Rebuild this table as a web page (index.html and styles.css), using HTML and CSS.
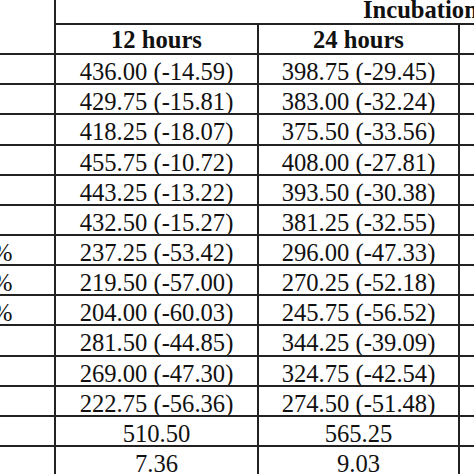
FILE: index.html
```html
<!DOCTYPE html>
<html lang="en">
<head>
<meta charset="utf-8">
<title>Incubation table</title>
<link rel="stylesheet" href="styles.css">
</head>
<body>
<table class="data">
  <colgroup>
    <col class="c-label">
    <col class="c-a">
    <col class="c-b">
    <col class="c-c">
  </colgroup>
  <thead>
    <tr>
      <th class="label" rowspan="2">Treatment</th>
      <th class="group" colspan="3">Incubation period (hours)</th>
    </tr>
    <tr>
      <th>12 hours</th>
      <th>24 hours</th>
      <th>48 hours</th>
    </tr>
  </thead>
  <tbody>
    <tr><td class="label">Control A</td><td>436.00 (-14.59)</td><td>398.75 (-29.45)</td><td></td></tr>
    <tr><td class="label">Control B</td><td>429.75 (-15.81)</td><td>383.00 (-32.24)</td><td></td></tr>
    <tr><td class="label">Control C</td><td>418.25 (-18.07)</td><td>375.50 (-33.56)</td><td></td></tr>
    <tr><td class="label">Vehicle A</td><td>455.75 (-10.72)</td><td>408.00 (-27.81)</td><td></td></tr>
    <tr><td class="label">Vehicle B</td><td>443.25 (-13.22)</td><td>393.50 (-30.38)</td><td></td></tr>
    <tr><td class="label">Vehicle C</td><td>432.50 (-15.27)</td><td>381.25 (-32.55)</td><td></td></tr>
    <tr><td class="label">Extract 1.0%</td><td>237.25 (-53.42)</td><td>296.00 (-47.33)</td><td></td></tr>
    <tr><td class="label">Extract 2.0%</td><td>219.50 (-57.00)</td><td>270.25 (-52.18)</td><td></td></tr>
    <tr><td class="label">Extract 3.0%</td><td>204.00 (-60.03)</td><td>245.75 (-56.52)</td><td></td></tr>
    <tr><td class="label">Drug A</td><td>281.50 (-44.85)</td><td>344.25 (-39.09)</td><td></td></tr>
    <tr><td class="label">Drug B</td><td>269.00 (-47.30)</td><td>324.75 (-42.54)</td><td></td></tr>
    <tr><td class="label">Drug C</td><td>222.75 (-56.36)</td><td>274.50 (-51.48)</td><td></td></tr>
    <tr><td class="label">Untreated</td><td>510.50</td><td>565.25</td><td></td></tr>
    <tr><td class="label">LSD</td><td>7.36</td><td>9.03</td><td></td></tr>
  </tbody>
</table>
</body>
</html>
```

FILE: styles.css
```css
html, body {
  margin: 0;
  padding: 0;
  background: #ffffff;
  overflow: hidden;
}

body {
  width: 474px;
  height: 474px;
}

.data {
  border-collapse: collapse;
  table-layout: fixed;
  width: 784px;
  margin-left: -125px;
  margin-top: -7.15px;
  font-family: "Liberation Serif", "Times New Roman", serif;
  font-size: 24.6px;
  color: #111111;
  border: 2px solid #222222;
}

.c-label { width: 179px; }
.c-a { width: 203px; }
.c-b { width: 201px; }
.c-c { width: 201px; }

.data th,
.data td {
  border: 2px solid #222222;
  line-height: 22px;
  text-align: center;
  white-space: nowrap;
  overflow: hidden;
  padding: 6px 0 0.15px 0;
}

.data th {
  font-weight: bold;
  padding: 4px 0 2.15px 0;
}

.data th.group {
  text-align: left;
  padding-left: 307px;
}

.data th.label {
  color: transparent;
}

.data td.label {
  text-align: left;
  padding-left: 7px;
}
```
